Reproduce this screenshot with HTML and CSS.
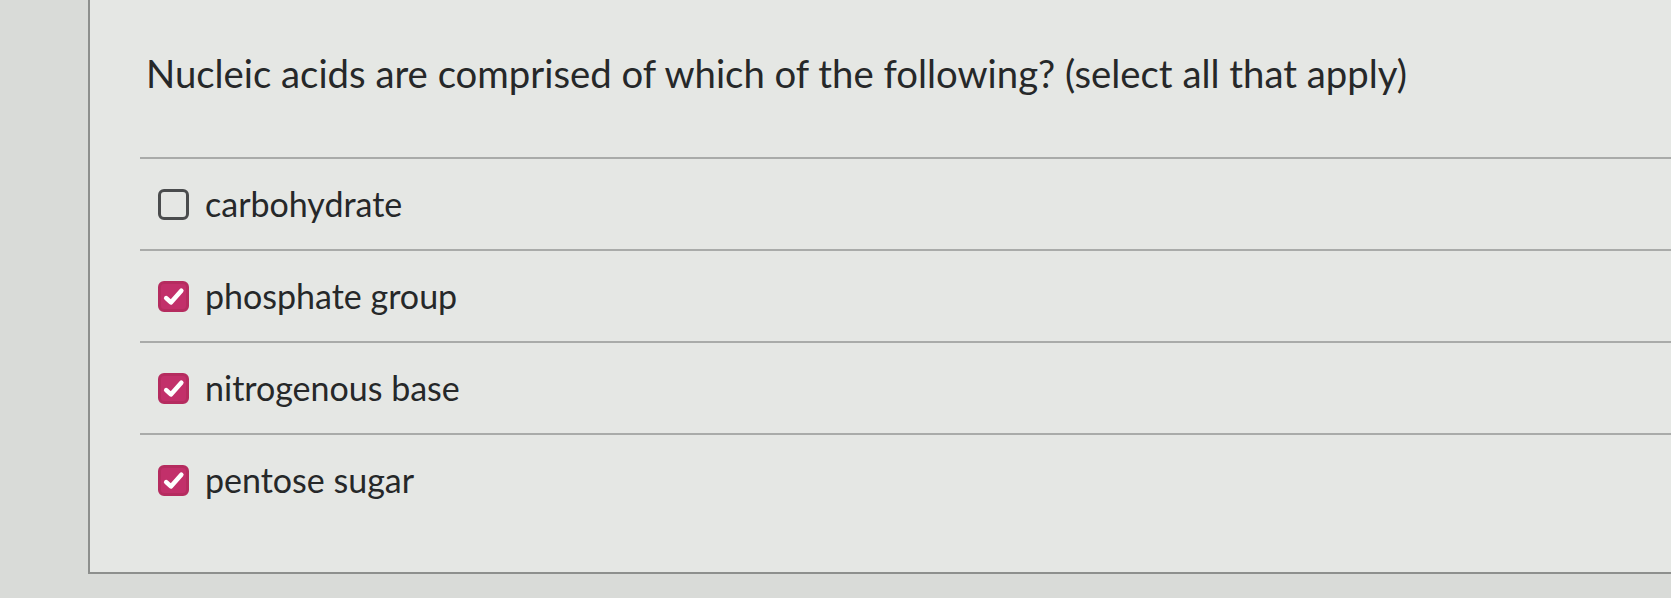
FILE: index.html
```html
<!DOCTYPE html>
<html lang="en">
<head>
<meta charset="utf-8">
<title>Question</title>
<link rel="stylesheet" href="styles.css">
</head>
<body>
<div class="panel">
  <div class="question">
    <p class="prompt">Nucleic acids are comprised of which of the following? (select all that apply)</p>
    <ul class="options">
      <li class="option">
        <span class="box"></span>
        <span class="label">carbohydrate</span>
      </li>
      <li class="option">
        <span class="box checked"><svg viewBox="0 0 24 24" width="27" height="27"><path d="M5 13.5l4.5 4.2L19.5 6.5" fill="none" stroke="#fff" stroke-width="4.4" stroke-linecap="round" stroke-linejoin="round"/></svg></span>
        <span class="label">phosphate group</span>
      </li>
      <li class="option">
        <span class="box checked"><svg viewBox="0 0 24 24" width="27" height="27"><path d="M5 13.5l4.5 4.2L19.5 6.5" fill="none" stroke="#fff" stroke-width="4.4" stroke-linecap="round" stroke-linejoin="round"/></svg></span>
        <span class="label">nitrogenous base</span>
      </li>
      <li class="option">
        <span class="box checked"><svg viewBox="0 0 24 24" width="27" height="27"><path d="M5 13.5l4.5 4.2L19.5 6.5" fill="none" stroke="#fff" stroke-width="4.4" stroke-linecap="round" stroke-linejoin="round"/></svg></span>
        <span class="label">pentose sugar</span>
      </li>
    </ul>
  </div>
</div>
</body>
</html>
```

FILE: styles.css
```css
html, body {
  margin: 0;
  padding: 0;
}
body {
  background: #d9dbd8;
  font-family: Lato, "Open Sans", sans-serif;
  color: #262829;
  height: 598px;
  overflow: hidden;
}
.panel {
  margin-left: 88px;
  height: 574px;
  background: #e5e7e4;
  border-left: 2px solid #8d8f8d;
  border-bottom: 2px solid #8d8f8d;
  box-sizing: border-box;
}
.question {
  padding-top: 50px;
}
.prompt {
  margin: 0 0 61px 56px;
  font-size: 38.3px;
  line-height: 46px;
  white-space: nowrap;
}
.options {
  list-style: none;
  margin: 0 0 0 50px;
  padding: 0;
}
.option {
  display: flex;
  align-items: center;
  gap: 16px;
  height: 92px;
  box-sizing: border-box;
  border-top: 2px solid #a9aba9;
  padding-left: 18px;
}
.box {
  width: 31px;
  height: 31px;
  box-sizing: border-box;
  border: 3px solid #4a4c4d;
  border-radius: 6px;
  display: flex;
  align-items: center;
  justify-content: center;
  flex: none;
}
.box.checked {
  background: #c2306a;
  border-color: #b52c5f;
}
.label {
  font-size: 34px;
  line-height: 40px;
}
```
